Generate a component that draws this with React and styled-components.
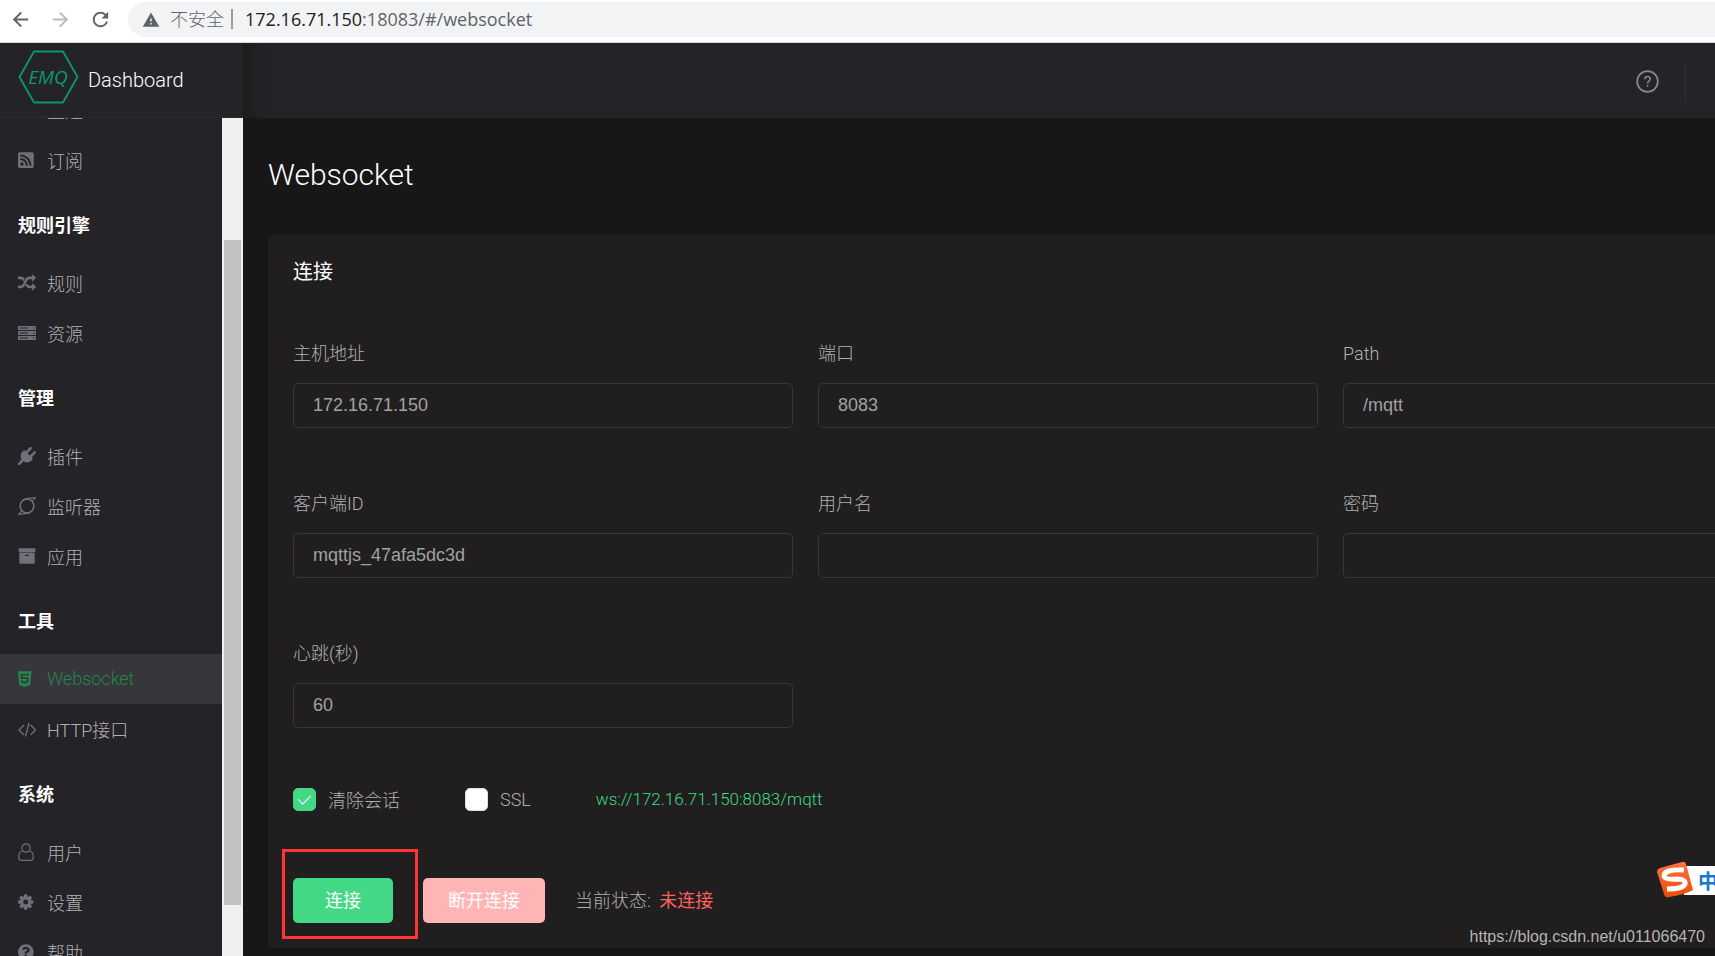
import React, { useState } from 'react';
import styled, { createGlobalStyle } from 'styled-components';
import { FaHtml5, FaQuestionCircle, FaRssSquare } from 'react-icons/fa';
import { MdArrowBack, MdArrowForward, MdRefresh, MdWarning } from 'react-icons/md';

const GlobalStyle = createGlobalStyle`
  * {
    box-sizing: border-box;
  }

  body {
    margin: 0;
    overflow: hidden;
    background-color: #171717;
    color: #b0b1b3;
    font-family: Roboto, 'Noto Sans CJK SC', sans-serif;
    font-size: 18px;
    font-weight: 300;
  }

  button, input {
    font: inherit;
  }
`;

const Page = styled.div`
  position: relative;
  display: flex;
  flex-direction: column;
  height: 100vh;
  overflow: hidden;
`;

const BrowserBar = styled.div`
  display: flex;
  flex: none;
  align-items: flex-start;
  height: 43px;
  padding-top: 2px;
  border-bottom: 1px solid #d5d7d9;
  background-color: #fff;
`;

const BrowserButton = styled.button`
  display: flex;
  align-items: center;
  justify-content: center;
  width: 40px;
  height: 35px;
  padding: 0;
  border: 0;
  background: none;
  color: ${props => (props.disabled ? '#b9bbbd' : '#5f6368')};
  font-size: 23px;
`;

const AddressBar = styled.div`
  display: flex;
  flex: 1;
  align-items: center;
  height: 35px;
  margin-left: 8px;
  padding: 0 0 2px 14px;
  border-radius: 18px 0 0 18px;
  background-color: #f1f3f4;
  color: #5f6368;
  font-family: 'Open Sans', 'Noto Sans CJK SC', sans-serif;
  font-weight: 400;

  svg {
    margin: 2px 10px 0 0;
  }
`;

const Insecure = styled.span`
  padding-right: 7px;
  border-right: 2px solid #9a9da0;
  line-height: 20px;
  font-weight: 300;
`;

const Address = styled.span`
  padding-left: 12px;

  strong {
    color: #202124;
    font-weight: 400;
  }
`;

const Shell = styled.div`
  display: flex;
  flex: 1;
  min-height: 0;
`;

const Sidebar = styled.aside`
  display: flex;
  flex: none;
  flex-direction: column;
  width: 243px;
  background-color: #242328;
`;

const Brand = styled.a`
  display: flex;
  flex: none;
  align-items: center;
  gap: 9px;
  height: 75px;
  padding-left: 18px;
  border-bottom: 1px solid #2c2b30;
  color: #fff;
  font-size: 20px;
  font-weight: 300;
  text-decoration: none;

  svg {
    margin-bottom: 6px;
  }
`;

const MenuArea = styled.div`
  display: flex;
  flex: 1;
  min-height: 0;
`;

const Menu = styled.nav`
  flex: 1;
  overflow: hidden;
`;

const MenuList = styled.ul`
  margin: -33px 0 0;
  padding: 0;
  list-style: none;
`;

const MenuTitle = styled.li`
  height: 73px;
  padding: 28px 18px 0;
  color: #fff;
  font-weight: 700;
  line-height: 26px;
`;

const MenuLink = styled.a`
  display: flex;
  align-items: center;
  height: 50px;
  padding: 0 0 1px 18px;
  background-color: ${props => (props.$active ? '#37363b' : 'transparent')};
  color: ${props => (props.$active ? '#22864f' : '#b0b1b3')};
  text-decoration: none;

  svg {
    flex: none;
    width: 18px;
    height: 18px;
    margin: 1px 11px 0 0;
    color: ${props => (props.$active ? '#22864f' : '#707178')};
  }
`;

const ScrollTrack = styled.div`
  width: 21px;
  padding: 122px 2px 51px;
  background-color: #f0f0f0;
`;

const ScrollThumb = styled.div`
  height: 100%;
  background-color: #c1c1c1;
`;

const Content = styled.div`
  flex: 1;
  min-width: 0;
`;

const TopBar = styled.header`
  display: flex;
  align-items: center;
  justify-content: flex-end;
  height: 75px;
  padding-right: 29px;
  background-color: #242328;
  box-shadow: inset 20px 0 16px -12px #1c1c1c;
`;

const HelpButton = styled.button`
  display: flex;
  padding: 2px 26px 0 0;
  border: 0;
  background: none;
  color: #85868f;
`;

const Divider = styled.div`
  width: 1px;
  height: 43px;
  background-color: #2e2d33;
`;

const Main = styled.main`
  padding: 39px 0 0 25px;
`;

const PageTitle = styled.h1`
  margin: 0 0 42px;
  color: #fff;
  font-size: 30px;
  font-weight: 300;
  line-height: 36px;
`;

const Card = styled.section`
  width: max-content;
  min-width: 100%;
  padding: 22px 25px 25px;
  border-radius: 6px;
  background-color: #201e1f;
`;

const CardTitle = styled.h2`
  margin: 0 0 54px;
  color: #fff;
  font-size: 20px;
  font-weight: 400;
  line-height: 30px;
`;

const Fields = styled.div`
  display: grid;
  grid-template-columns: repeat(3, minmax(500px, 1fr));
  column-gap: 25px;
  row-gap: 63px;
`;

const Field = styled.div`
  display: flex;
  flex-direction: column;
  gap: 16px;
  line-height: 26px;

  input {
    height: 45px;
    padding: 0 19px;
    border: 1px solid #37363b;
    border-radius: 5px;
    background: none;
    color: #a0a1a3;
    font-family: 'Liberation Sans', sans-serif;
    font-weight: 400;
    outline: none;
  }
`;

const Options = styled.div`
  display: flex;
  align-items: center;
  height: 26px;
  margin-top: 58px;
`;

const CheckLabel = styled.label`
  display: flex;
  align-items: center;
  gap: 12px;
  margin-right: 65px;
`;

const Checkbox = styled.input`
  width: 23px;
  height: 23px;
  margin: 0;
  border: 1px solid #dcdfe6;
  border-radius: 5px;
  background-color: #fff;
  appearance: none;

  &:checked {
    display: grid;
    place-items: center;
    border-color: #42d885;
    background-color: #42d885;
  }

  &:checked::before {
    width: 6px;
    height: 11px;
    border: solid #fff;
    border-width: 0 1px 1px 0;
    content: '';
    transform: translateY(-1px) rotate(45deg);
  }
`;

const Url = styled.span`
  color: #3ddb82;
  font-size: 17px;
`;

const Actions = styled.div`
  display: flex;
  align-items: center;
  margin-top: 66px;
`;

const Button = styled.button`
  display: block;
  height: 45px;
  padding: 0 0 4px;
  border: 0;
  border-radius: 5px;
  color: #fff;
  font-weight: 400;
`;

const ConnectButton = styled(Button)`
  width: 100px;
  background-color: #42d885;
`;

const DisconnectButton = styled(Button)`
  width: 122px;
  margin: 0 30px;
  background-color: #ffb5b5;
`;

const Highlight = styled.div`
  position: relative;

  &::after {
    position: absolute;
    top: -29px;
    right: -25px;
    bottom: -16px;
    left: -11px;
    border: 3px solid #ff3535;
    content: '';
    pointer-events: none;
  }
`;

const StatusText = styled.p`
  margin: 0;
  padding-bottom: 4px;
`;

const Status = styled.span`
  margin-left: 4px;
  color: #ff6060;
  font-weight: 400;
`;

const Watermark = styled.div`
  position: absolute;
  right: 10px;
  bottom: 9px;
  color: #b5b5b5;
  font-family: 'Liberation Sans', sans-serif;
  font-size: 16px;
  font-weight: 400;
  line-height: 20px;
`;

const InputMethod = styled.div`
  position: absolute;
  right: 0;
  bottom: 57px;
  width: 59px;
  height: 38px;
`;

const Logo = () => (
  <svg width="61" height="54" viewBox="0 0 61 54">
    <path d="M16 1.500H45L59.500 27L45 52.500H16L1.500 27Z" fill="none" stroke="#0b9a66" strokeWidth="1.800" strokeLinejoin="round" />
    <text x="30" y="34" textAnchor="middle" fill="#0b9a66" fontFamily="Open Sans" fontSize="19" fontStyle="italic" fontWeight="500">EMQ</text>
  </svg>
);

const RandomIcon = () => (
  <svg viewBox="0 0 1792 1792" fill="currentColor">
    <path d="M666 481q-60 92-137 273-22-45-37-72.500t-40.500-63.500-51-56.500-63-35-81.500-14.500h-224q-14 0-23-9t-9-23v-192q0-14 9-23t23-9h224q250 0 410 225zm1126 799q0 14-9 23l-320 320q-9 9-23 9-13 0-22.500-9.500t-9.500-22.500v-192q-32 0-85 .5t-81 1-73-1-71-5-64-10.500-63-18.500-58-28.500-59-40-55-53.500-56-69.500q59-93 136-273 22 45 37 72.500t40.500 63.500 51 56.500 63 35 81.500 14.500h256v-192q0-14 9-23t23-9q12 0 24 10l319 319q9 9 9 23zm0-896q0 14-9 23l-320 320q-9 9-23 9-13 0-22.500-9.500t-9.500-22.500v-192h-256q-48 0-87 15t-69 45-51 61.500-45 77.500q-32 62-78 171-29 66-49.500 111t-54 105-64 100-74 83-90 68.500-106.500 42-128 16.500h-224q-14 0-23-9t-9-23v-192q0-14 9-23t23-9h224q48 0 87-15t69-45 51-61.500 45-77.500q32-62 78-171 29-66 49.500-111t54-105 64-100 74-83 90-68.500 106.500-42 128-16.500h256v-192q0-14 9-23t23-9q12 0 24 10l319 319q9 9 9 23z" />
  </svg>
);

const ServerIcon = () => (
  <svg viewBox="0 0 18 18">
    {[2, 7, 12].map(y => (
      <g key={y}>
        <rect y={y} width="18" height="4" fill="currentColor" />
        <path d={`M1.500 ${y + 2}H10M15 ${y + 2}H16.500`} stroke="#242328" strokeWidth="1" />
      </g>
    ))}
  </svg>
);

const PlugIcon = () => (
  <svg viewBox="0 0 1792 1792" fill="currentColor">
    <path d="M1755 453q37 38 37 90.500t-37 90.500l-401 400 150 150-160 160q-163 163-389.500 186.500t-411.500-100.500l-362 362h-181v-181l362-362q-124-185-100.500-411.500t186.500-389.500l160-160 150 150 400-401q38-37 91-37t90 37 37 90.500-37 90.500l-400 401 234 234 401-400q38-37 91-37t90 37z" />
  </svg>
);

const ListenerIcon = () => (
  <svg viewBox="0 0 18 18" fill="none" stroke="currentColor">
    <ellipse cx="9" cy="9" rx="6.800" ry="7" strokeWidth="1.600" />
    <path d="M5.500 3C8 1 12 1.500 17.500 .5C16.500 1.500 15 2.500 14.500 4.500M12.500 15C10 17 6 16.500 .5 17.500C1.500 16.500 3 15.500 3.500 13.500" strokeWidth="1.100" />
  </svg>
);

const ArchiveIcon = () => (
  <svg viewBox="0 0 1792 1792" fill="currentColor">
    <path d="M1088 832q0-26-19-45t-45-19h-256q-26 0-45 19t-19 45 19 45 45 19h256q26 0 45-19t19-45zm576-192v960q0 26-19 45t-45 19h-1408q-26 0-45-19t-19-45v-960q0-26 19-45t45-19h1408q26 0 45 19t19 45zm64-448v256q0 26-19 45t-45 19h-1536q-26 0-45-19t-19-45v-256q0-26 19-45t45-19h1536q26 0 45 19t19 45z" />
  </svg>
);

const CodeIcon = () => (
  <svg viewBox="0 0 18 18" fill="none" stroke="currentColor" strokeWidth="1.300">
    <path d="M6 5L1 10L6 15M12.500 5L17.500 10L12.500 15M11 3L7.500 16.500" />
  </svg>
);

const UserIcon = () => (
  <svg viewBox="0 0 18 18" fill="none" stroke="currentColor" strokeWidth="1.200">
    <circle cx="8" cy="5" r="4.200" />
    <path d="M4.500 8C1.500 8.500 .7 11 .7 14C.7 16 1.800 17.300 3.500 17.300H12.500C14.200 17.300 15.300 16 15.300 14C15.300 11 14.500 8.500 11.500 8" />
  </svg>
);

const CogIcon = () => (
  <svg viewBox="128 0 1792 1792" fill="currentColor">
    <path d="M1152 896q0-106-75-181t-181-75-181 75-75 181 75 181 181 75 181-75 75-181zm512-109v222q0 12-8 23t-20 13l-185 28q-19 54-39 91 35 50 107 138 10 12 10 25t-9 23q-27 37-99 108t-94 71q-12 0-26-9l-138-108q-44 23-91 38-16 136-29 186-7 28-36 28h-222q-14 0-24.500-8.500t-11.500-21.500l-28-184q-49-16-90-37l-141 107q-10 9-25 9-14 0-25-11-126-114-165-168-7-10-7-23 0-12 8-23 15-21 51-66.500t54-70.500q-27-50-41-99l-183-27q-13-2-21-12.500t-8-23.500v-222q0-12 8-23t19-13l186-28q14-46 39-92-40-57-107-138-10-12-10-24 0-10 9-23 26-36 98.500-107.500t94.500-71.500q13 0 26 10l138 107q44-23 91-38 16-136 29-186 7-28 36-28h222q14 0 24.500 8.500t11.500 21.500l28 184q49 16 90 37l142-107q9-9 24-9 13 0 25 10 129 119 165 170 7 8 7 22 0 12-8 23-15 21-51 66.500t-54 70.500q26 50 41 98l183 28q13 2 21 12.500t8 23.500z" />
  </svg>
);

const HelpIcon = () => (
  <svg width="23" height="23" viewBox="0 0 23 23" fill="none" stroke="currentColor">
    <circle cx="11.500" cy="11.500" r="10.300" strokeWidth="1.800" />
    <path d="M8.800 9.200C8.800 5.600 14.200 5.800 14.200 9C14.200 11 11.500 11.200 11.500 13.500M11.500 15V16.800" strokeWidth="1.600" />
  </svg>
);

const menu = [
  { text: '主题', icon: <ServerIcon /> },
  { text: '订阅', icon: <FaRssSquare preserveAspectRatio="xMinYMid" /> },
  { title: '规则引擎' },
  { text: '规则', icon: <RandomIcon /> },
  { text: '资源', icon: <ServerIcon /> },
  { title: '管理' },
  { text: '插件', icon: <PlugIcon /> },
  { text: '监听器', icon: <ListenerIcon /> },
  { text: '应用', icon: <ArchiveIcon /> },
  { title: '工具' },
  { text: 'Websocket', icon: <FaHtml5 preserveAspectRatio="xMinYMid" />, active: true },
  { text: 'HTTP接口', icon: <CodeIcon /> },
  { title: '系统' },
  { text: '用户', icon: <UserIcon /> },
  { text: '设置', icon: <CogIcon /> },
  { text: '帮助', icon: <FaQuestionCircle viewBox="8 -28 568 568" /> },
];

const fields = [
  { id: 'host', label: '主机地址', value: '172.16.71.150' },
  { id: 'port', label: '端口', value: '8083' },
  { id: 'path', label: 'Path', value: '/mqtt' },
  { id: 'clientId', label: '客户端ID', value: 'mqttjs_47afa5dc3d' },
  { id: 'username', label: '用户名', value: '' },
  { id: 'password', label: '密码', value: '', type: 'password' },
  { id: 'keepalive', label: '心跳(秒)', value: '60' },
];

const App = () => {
  const [clean, setClean] = useState(true);
  const [ssl, setSsl] = useState(false);

  return (
    <Page>
      <GlobalStyle />
      <BrowserBar>
        <BrowserButton aria-label="Back"><MdArrowBack /></BrowserButton>
        <BrowserButton aria-label="Forward" disabled><MdArrowForward /></BrowserButton>
        <BrowserButton aria-label="Reload"><MdRefresh /></BrowserButton>
        <AddressBar>
          <MdWarning />
          <Insecure>不安全</Insecure>
          <Address><strong>172.16.71.150</strong>:18083/#/websocket</Address>
        </AddressBar>
      </BrowserBar>

      <Shell>
        <Sidebar>
          <Brand href="#/">
            <Logo />
            Dashboard
          </Brand>
          <MenuArea>
            <Menu>
              <MenuList>
                {menu.map(item => item.title
                  ? <MenuTitle key={item.title}>{item.title}</MenuTitle>
                  : (
                    <li key={item.text}>
                      <MenuLink href="#/" $active={item.active}>
                        {item.icon}
                        {item.text}
                      </MenuLink>
                    </li>
                  ))}
              </MenuList>
            </Menu>
            <ScrollTrack>
              <ScrollThumb />
            </ScrollTrack>
          </MenuArea>
        </Sidebar>

        <Content>
          <TopBar>
            <HelpButton aria-label="Help"><HelpIcon /></HelpButton>
            <Divider />
          </TopBar>

          <Main>
            <PageTitle>Websocket</PageTitle>
            <Card>
              <CardTitle>连接</CardTitle>
              <Fields>
                {fields.map(field => (
                  <Field key={field.id}>
                    <label htmlFor={field.id}>{field.label}</label>
                    <input id={field.id} type={field.type || 'text'} defaultValue={field.value} />
                  </Field>
                ))}
              </Fields>

              <Options>
                <CheckLabel>
                  <Checkbox type="checkbox" checked={clean} onChange={() => setClean(!clean)} />
                  清除会话
                </CheckLabel>
                <CheckLabel>
                  <Checkbox type="checkbox" checked={ssl} onChange={() => setSsl(!ssl)} />
                  SSL
                </CheckLabel>
                <Url>ws://172.16.71.150:8083/mqtt</Url>
              </Options>

              <Actions>
                <Highlight>
                  <ConnectButton>连接</ConnectButton>
                </Highlight>
                <DisconnectButton>断开连接</DisconnectButton>
                <StatusText>
                  当前状态: <Status>未连接</Status>
                </StatusText>
              </Actions>
            </Card>
          </Main>
        </Content>
      </Shell>

      <InputMethod>
        <svg width="59" height="38" viewBox="0 0 59 38">
          <defs>
            <linearGradient id="sogou" x1="0" y1="0" x2="0" y2="1">
              <stop offset="0" stopColor="#ff7340" />
              <stop offset="1" stopColor="#ee4a0c" />
            </linearGradient>
          </defs>
          <rect x="28" y="5" width="31" height="29" fill="#fff" />
          <path d="M4 7L26 1Q29 0 30 3L37 29Q28 34 13 36Q9 37 8 33L1 11Q1 8 4 7Z" fill="url(#sogou)" />
          <path d="M28 9Q8 8 8 15Q9 19 21 18Q30 18 29 23Q27 28 11 28" fill="none" stroke="#fff" strokeWidth="5" />
          <text x="42" y="28" fill="#1976d2" fontFamily="Noto Sans CJK SC" fontSize="20" fontWeight="700">中</text>
        </svg>
      </InputMethod>
      <Watermark>https://blog.csdn.net/u011066470</Watermark>
    </Page>
  );
};

export default App;
